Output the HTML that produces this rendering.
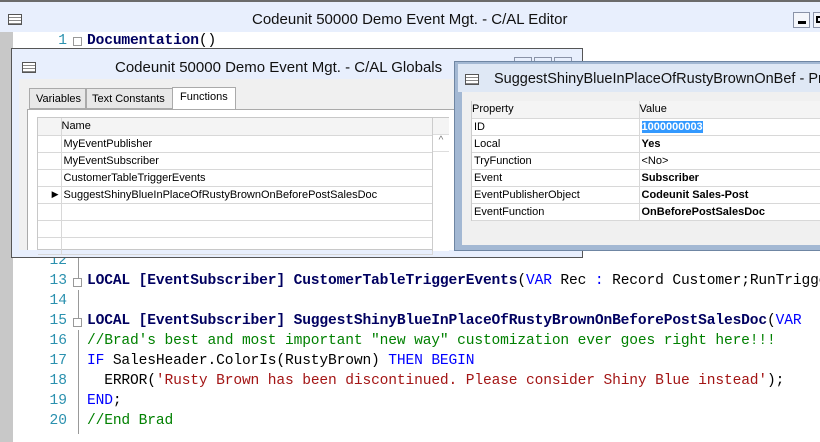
<!DOCTYPE html>
<html><head><meta charset="utf-8"><style>
*{margin:0;padding:0;box-sizing:border-box}
body{width:820px;height:442px;overflow:hidden;position:relative;background:#fff;font-family:"Liberation Sans",sans-serif}
.abs{position:absolute}
.code{font-family:"Liberation Mono",monospace;font-size:14.6px;white-space:pre;letter-spacing:-0.15px}
.ln{position:absolute;left:40px;width:27px;text-align:right;color:#2b91af;font-family:"Liberation Mono",monospace;font-size:14.6px}
.kw{color:#0000ff}.b{font-weight:bold;color:#000060}.cm{color:#008000}.st{color:#a31515}
.icon{position:absolute;width:14px;height:11px;border:1px solid #555;background:repeating-linear-gradient(#fff 0 2px,#888 2px 3px)}
.grid td{border-right:1px solid #d8d8d8;border-bottom:1px solid #d8d8d8;height:17px;font-size:11px;padding:0 2px;white-space:nowrap}
.grid{border-collapse:collapse;table-layout:fixed}
</style></head><body>
<div class="abs" style="left:0;top:0;width:820px;height:2px;background:#6b6b6b"></div>
<div class="abs" style="left:0;top:2px;width:820px;height:30px;background:#e8effd"></div>
<div class="icon" style="left:8px;top:14px"></div>
<div class="abs" style="left:252px;top:11px;font-size:15px;color:#111">Codeunit 50000 Demo Event Mgt. - C/AL Editor</div>
<div class="abs" style="left:793px;top:12px;width:17px;height:16px;border:1px solid #8a93a8;background:#f4f6fb"><div style="position:absolute;left:4px;top:8px;width:8px;height:3px;background:#000"></div></div>
<div class="abs" style="left:813px;top:12px;width:10px;height:16px;border:1px solid #8a93a8;background:#f4f6fb"><div style="position:absolute;left:2px;top:3px;width:8px;height:7px;border:2px solid #000"></div></div>
<div class="abs" style="left:0;top:32px;width:13px;height:410px;background:#c8c8c8"></div>
<div class="ln" style="top:33px">1</div>
<div class="abs" style="left:73px;top:37px;width:9px;height:9px;border:1px solid #999"></div>
<div class="abs code" style="left:87px;top:33px"><span class="b">Documentation</span>()</div>
<div class="ln" style="top:253px">12</div>
<div class="ln" style="top:273px">13</div>
<div class="ln" style="top:293px">14</div>
<div class="ln" style="top:313px">15</div>
<div class="ln" style="top:333px">16</div>
<div class="ln" style="top:353px">17</div>
<div class="ln" style="top:373px">18</div>
<div class="ln" style="top:393px">19</div>
<div class="ln" style="top:413px">20</div>
<div class="abs" style="left:78px;top:250px;width:1px;height:32px;background:#999"></div>
<div class="abs" style="left:78px;top:290px;width:1px;height:32px;background:#999"></div>
<div class="abs" style="left:78px;top:330px;width:1px;height:104px;background:#999"></div>
<div class="abs" style="left:73px;top:278px;width:9px;height:9px;border:1px solid #999;background:#fff"></div>
<div class="abs" style="left:73px;top:318px;width:9px;height:9px;border:1px solid #999;background:#fff"></div>
<div class="abs code" style="left:87px;top:273px"><span class="b">LOCAL [EventSubscriber] CustomerTableTriggerEvents</span>(<span class="kw">VAR</span> Rec <span class="kw">:</span> Record Customer;RunTrigger</div>
<div class="abs code" style="left:87px;top:313px"><span class="b">LOCAL [EventSubscriber] SuggestShinyBlueInPlaceOfRustyBrownOnBeforePostSalesDoc</span>(<span class="kw">VAR</span></div>
<div class="abs code cm" style="left:87px;top:333px">//Brad's best and most important "new way" customization ever goes right here!!!</div>
<div class="abs code" style="left:87px;top:353px"><span class="kw">IF</span> SalesHeader.ColorIs(RustyBrown) <span class="kw">THEN BEGIN</span></div>
<div class="abs code" style="left:87px;top:373px">  ERROR(<span class="st">'Rusty Brown has been discontinued. Please consider Shiny Blue instead'</span>);</div>
<div class="abs code" style="left:87px;top:393px"><span class="kw">END</span>;</div>
<div class="abs code cm" style="left:87px;top:413px">//End Brad</div>
<div class="abs" style="left:11px;top:48px;width:572px;height:210px;border:1px solid #555;background:#e8effd"></div>
<div class="abs" style="left:514px;top:57px;width:18px;height:10px;border:1px solid #8a93a8"></div>
<div class="abs" style="left:534px;top:57px;width:18px;height:10px;border:1px solid #8a93a8"></div>
<div class="abs" style="left:554px;top:57px;width:18px;height:10px;border:1px solid #8a93a8"></div>
<div class="icon" style="left:22px;top:62px"></div>
<div class="abs" style="left:115px;top:59px;font-size:15px;color:#111">Codeunit 50000 Demo Event Mgt. - C/AL Globals</div>
<div class="abs" style="left:19px;top:79px;width:440px;height:171px;background:#f0f0f0"></div>
<div class="abs" style="left:29px;top:88px;width:57px;height:21px;border:1px solid #aaa;background:#e8e8e8;font-size:11px;padding:4px 0 0 6px">Variables</div>
<div class="abs" style="left:86px;top:88px;width:87px;height:21px;border:1px solid #aaa;background:#e8e8e8;font-size:11px;padding:4px 0 0 5px">Text Constants</div>
<div class="abs" style="left:172px;top:87px;width:64px;height:23px;border:1px solid #aaa;border-bottom:none;background:#fff;font-size:11px;padding:3px 0 0 7px">Functions</div>
<div class="abs" style="left:27px;top:109px;width:432px;height:141px;border-top:1px solid #aaa;border-left:1px solid #aaa;background:#fff"></div>
<div class="abs" style="left:37px;top:117px;width:412px;height:133px;border:1px solid #c8c8c8;background:#fff">
<table class="grid" style="width:394px">
<col style="width:23px"><col style="width:371px">
<tr><td style="background:#f4f4f4"></td><td style="background:#f4f4f4;padding:0">Name</td></tr>
<tr><td></td><td>MyEventPublisher</td></tr>
<tr><td></td><td>MyEventSubscriber</td></tr>
<tr><td></td><td>CustomerTableTriggerEvents</td></tr>
<tr><td style="font-size:9px;text-align:right">&#9654;</td><td>SuggestShinyBlueInPlaceOfRustyBrownOnBeforePostSalesDoc</td></tr>
<tr><td></td><td></td></tr><tr><td></td><td></td></tr><tr><td></td><td></td></tr>
</table>
<div class="abs" style="left:394px;top:0;width:17px;height:133px;border-left:1px solid #ccc;background:#fff"><div style="height:17px;background:#f4f4f4;border-bottom:1px solid #ddd"></div><div style="font-size:10px;color:#777;text-align:center;height:17px;border-bottom:1px solid #ddd">^</div></div>
</div>
<div class="abs" style="left:454px;top:61px;width:370px;height:190px;background:#a3b8d3;border:1px solid #6f86a3"></div>
<div class="abs" style="left:458px;top:64px;width:366px;height:28px;background:#dfe8f5"></div>
<div class="icon" style="left:465px;top:74px"></div>
<div class="abs" style="left:494px;top:71px;font-size:14.5px;color:#111;white-space:nowrap">SuggestShinyBlueInPlaceOfRustyBrownOnBef - Pr</div>
<div class="abs" style="left:462px;top:92px;width:362px;height:153px;background:#f0f0f0"></div>
<div class="abs" style="left:471px;top:101px;width:353px;height:120px;background:#fff;border-left:1px solid #ccc">
<table class="grid" style="width:360px">
<col style="width:167px"><col style="width:193px">
<tr><td style="background:#f4f4f4;padding:0">Property</td><td style="background:#f4f4f4;padding:0">Value</td></tr>
<tr><td>ID</td><td><span style="background:#3399ff;color:#fff;font-weight:bold">1000000003</span></td></tr>
<tr><td>Local</td><td><b>Yes</b></td></tr>
<tr><td>TryFunction</td><td>&lt;No&gt;</td></tr>
<tr><td>Event</td><td><b>Subscriber</b></td></tr>
<tr><td>EventPublisherObject</td><td><b>Codeunit Sales-Post</b></td></tr>
<tr><td>EventFunction</td><td><b>OnBeforePostSalesDoc</b></td></tr>
</table>
</div>
</body></html>
